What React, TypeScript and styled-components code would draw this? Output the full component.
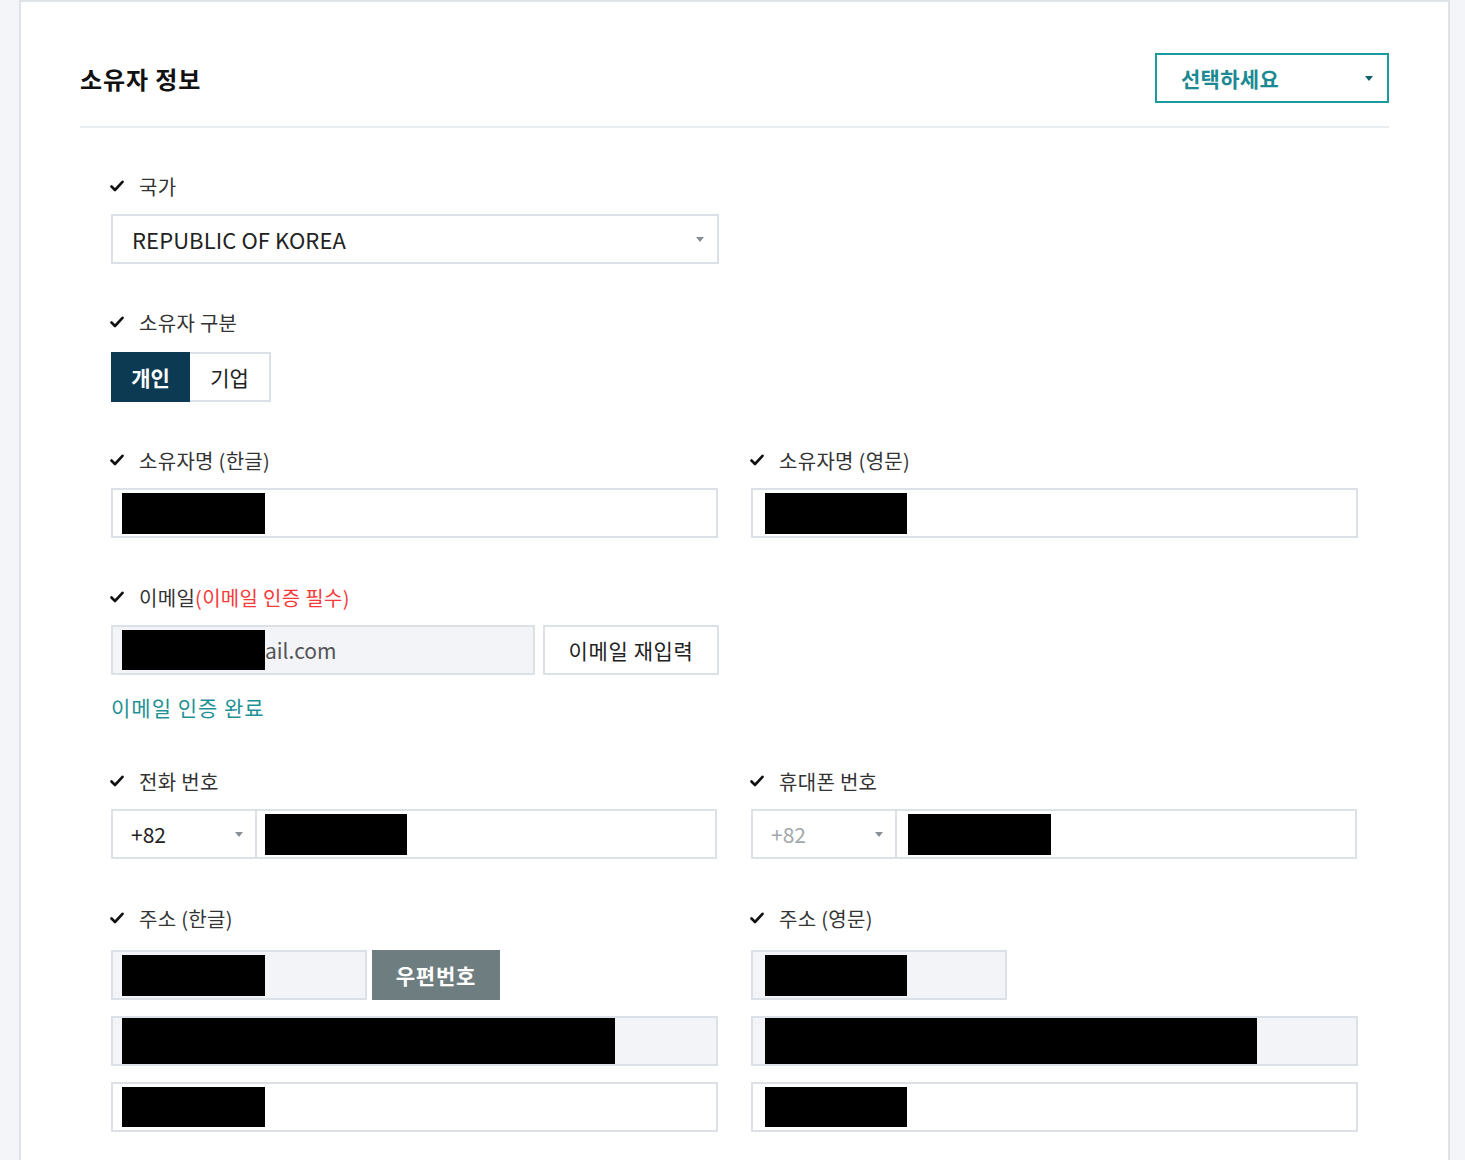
import React from "react";
import styled, { createGlobalStyle } from "styled-components";

const GlobalStyle = createGlobalStyle`
  html, body { margin: 0; padding: 0; }
  body {
    background: #f3f5f9;
    font-family: "Noto Sans CJK KR", "Noto Sans", sans-serif;
    color: #222;
  }
`;

const Page = styled.div`
  padding-left: 19px;
  width: 1431px;
  height: 1160px;
  overflow: hidden;
`;

const Card = styled.section`
  background: #fff;
  border: 2px solid #dfe3e8;
  border-bottom: none;
  min-height: 1200px;
  padding: 51px 59px 0 59px;
  box-sizing: border-box;
`;

const Header = styled.div`
  display: flex;
  align-items: center;
  justify-content: space-between;
  padding-bottom: 23px;
  border-bottom: 2px solid #eaedf0;
`;

const Title = styled.h2`
  margin: 0;
  font-size: 24px;
  font-weight: 700;
  color: #111;
  letter-spacing: 0.9px;
`;

const HeaderSelect = styled.button`
  width: 234px;
  height: 50px;
  box-sizing: border-box;
  border: 2px solid #1b9aa0;
  background: #fff;
  display: flex;
  align-items: center;
  justify-content: space-between;
  padding: 0 14px 0 24px;
  font-family: inherit;
  font-size: 21px;
  font-weight: 700;
  letter-spacing: 0.3px;
  color: #1b8a92;
  cursor: pointer;
`;

const Caret = styled.span<{ $color?: string }>`
  width: 0;
  height: 0;
  border-left: 4px solid transparent;
  border-right: 4px solid transparent;
  border-top: 5px solid ${(p) => p.$color || "#8a8f94"};
`;

const Form = styled.div`
  padding: 47px 32px 0 31px;
  display: flex;
  flex-direction: column;
`;

const Section = styled.div<{ $gap?: number }>`
  margin-bottom: ${(p) => (p.$gap ?? 47)}px;
`;

const TwoCol = styled.div`
  display: grid;
  grid-template-columns: 607px 607px;
  column-gap: 33px;
  margin-bottom: 48px;
`;

const Label = styled.div`
  display: flex;
  align-items: center;
  gap: 15px;
  height: 24px;
  box-sizing: border-box;
  padding-bottom: 2px;
  margin-bottom: 15px;
  margin-left: -1px;
  font-size: 20px;
  color: #333;
  letter-spacing: 0.3px;
`;

const Required = styled.span`
  color: #f53a3a;
`;

const Input = styled.div<{ $grey?: boolean; $width?: number; $pad?: number }>`
  width: ${(p) => (p.$width ? `${p.$width}px` : "100%")};
  height: 50px;
  box-sizing: border-box;
  border: 2px solid #dce1e7;
  background: ${(p) => (p.$grey ? "#f2f4f8" : "#fff")};
  display: flex;
  align-items: center;
  padding: 0 10px 0 ${(p) => p.$pad ?? 9}px;
  font-size: 21px;
  color: #222;
`;

const SelectBox = styled(Input)`
  justify-content: space-between;
  padding: 0 13px 0 19px;
  font-size: 22px;
  letter-spacing: 0.1px;
`;

const Redacted = styled.span<{ $w: number; $h?: number }>`
  display: inline-block;
  width: ${(p) => p.$w}px;
  height: ${(p) => p.$h ?? 41}px;
  background: #000;
  flex-shrink: 0;
`;

const EmailText = styled.span`
  color: #555;
  font-size: 21px;
`;

const Row = styled.div<{ $gap?: number }>`
  display: flex;
  gap: ${(p) => p.$gap ?? 8}px;
`;

const Toggle = styled.div`
  display: flex;
  height: 50px;
  margin-top: 17px;
`;

const ToggleBtn = styled.button<{ $active?: boolean }>`
  height: 50px;
  width: ${(p) => (p.$active ? 79 : 81)}px;
  box-sizing: border-box;
  border: 2px solid ${(p) => (p.$active ? "#0c3a52" : "#dce1e7")};
  border-left: ${(p) => (p.$active ? "2px solid #0c3a52" : "none")};
  background: ${(p) => (p.$active ? "#0c3a52" : "#fff")};
  color: ${(p) => (p.$active ? "#fff" : "#222")};
  font-family: inherit;
  font-size: 21px;
  font-weight: ${(p) => (p.$active ? 700 : 400)};
  padding: 0;
`;

const OutlineButton = styled.button`
  width: 176px;
  height: 50px;
  box-sizing: border-box;
  border: 2px solid #dce1e7;
  background: #fff;
  font-family: inherit;
  font-size: 21px;
  letter-spacing: 0.6px;
  color: #222;
  padding: 0;
`;

const ZipButton = styled.button`
  width: 128px;
  height: 50px;
  border: none;
  background: #6e7e80;
  color: #fff;
  font-family: inherit;
  font-size: 21px;
  letter-spacing: 0.8px;
  font-weight: 700;
  padding: 0;
`;

const Done = styled.div`
  margin-top: 20px;
  height: 24px;
  display: flex;
  align-items: center;
  font-size: 21px;
  color: #1f9194;
  letter-spacing: 1px;
`;

const PhoneGroup = styled.div`
  display: flex;
  height: 50px;
  box-sizing: border-box;
  border: 2px solid #dce1e7;
  width: 606px;
`;

const CodeSelect = styled.div<{ $muted?: boolean }>`
  width: 144px;
  box-sizing: border-box;
  border-right: 2px solid #dce1e7;
  display: flex;
  align-items: center;
  justify-content: space-between;
  padding: 0 12px 0 18px;
  font-size: 21px;
  color: ${(p) => (p.$muted ? "#a3a7ab" : "#222")};
`;

const PhoneInput = styled.div<{ $pad?: number }>`
  flex: 1;
  display: flex;
  align-items: center;
  padding-left: ${(p) => p.$pad ?? 8}px;
`;

const Stack = styled.div`
  display: flex;
  flex-direction: column;
  gap: 16px;
  padding-top: 4px;
`;

const Check = () => (
  <svg width="14" height="12" viewBox="0 0 14 12" aria-hidden>
    <path d="M1.5 6.5 L5 10 L12.5 1.8" fill="none" stroke="#111" strokeWidth="2.6" strokeLinecap="round" strokeLinejoin="round" />
  </svg>
);

const FieldLabel: React.FC<{ children: React.ReactNode }> = ({ children }) => (
  <Label>
    <Check />
    <span>{children}</span>
  </Label>
);

export default function App() {
  return (
    <>
      <GlobalStyle />
      <Page>
        <Card>
          <Header>
            <Title>소유자 정보</Title>
            <HeaderSelect>
              <span>선택하세요</span>
              <Caret $color="#10606a" />
            </HeaderSelect>
          </Header>

          <Form>
            <Section>
              <FieldLabel>국가</FieldLabel>
              <SelectBox $width={608}>
                <span>REPUBLIC OF KOREA</span>
                <Caret />
              </SelectBox>
            </Section>

            <Section $gap={47}>
              <FieldLabel>소유자 구분</FieldLabel>
              <Toggle>
                <ToggleBtn $active>개인</ToggleBtn>
                <ToggleBtn>기업</ToggleBtn>
              </Toggle>
            </Section>

            <TwoCol>
              <div>
                <FieldLabel>소유자명 (한글)</FieldLabel>
                <Input>
                  <Redacted $w={143} />
                </Input>
              </div>
              <div>
                <FieldLabel>소유자명 (영문)</FieldLabel>
                <Input $pad={12}>
                  <Redacted $w={142} />
                </Input>
              </div>
            </TwoCol>

            <Section $gap={51}>
              <FieldLabel>
                이메일<Required>(이메일 인증 필수)</Required>
              </FieldLabel>
              <Row>
                <Input $grey $width={424}>
                  <Redacted $w={143} $h={40} />
                  <EmailText>ail.com</EmailText>
                </Input>
                <OutlineButton>이메일 재입력</OutlineButton>
              </Row>
              <Done>이메일 인증 완료</Done>
            </Section>

            <TwoCol>
              <div>
                <FieldLabel>전화 번호</FieldLabel>
                <PhoneGroup>
                  <CodeSelect>
                    <span>+82</span>
                    <Caret />
                  </CodeSelect>
                  <PhoneInput>
                    <Redacted $w={142} />
                  </PhoneInput>
                </PhoneGroup>
              </div>
              <div>
                <FieldLabel>휴대폰 번호</FieldLabel>
                <PhoneGroup>
                  <CodeSelect $muted>
                    <span>+82</span>
                    <Caret />
                  </CodeSelect>
                  <PhoneInput $pad={11}>
                    <Redacted $w={143} />
                  </PhoneInput>
                </PhoneGroup>
              </div>
            </TwoCol>

            <TwoCol>
              <div>
                <FieldLabel>주소 (한글)</FieldLabel>
                <Stack>
                  <Row $gap={5}>
                    <Input $grey $width={256}>
                      <Redacted $w={143} />
                    </Input>
                    <ZipButton>우편번호</ZipButton>
                  </Row>
                  <Input $grey>
                    <Redacted $w={493} $h={46} />
                  </Input>
                  <Input>
                    <Redacted $w={143} $h={40} />
                  </Input>
                </Stack>
              </div>
              <div>
                <FieldLabel>주소 (영문)</FieldLabel>
                <Stack>
                  <Input $grey $width={256} $pad={12}>
                    <Redacted $w={142} />
                  </Input>
                  <Input $grey $pad={12}>
                    <Redacted $w={492} $h={46} />
                  </Input>
                  <Input $pad={12}>
                    <Redacted $w={142} $h={40} />
                  </Input>
                </Stack>
              </div>
            </TwoCol>
          </Form>
        </Card>
      </Page>
    </>
  );
}
